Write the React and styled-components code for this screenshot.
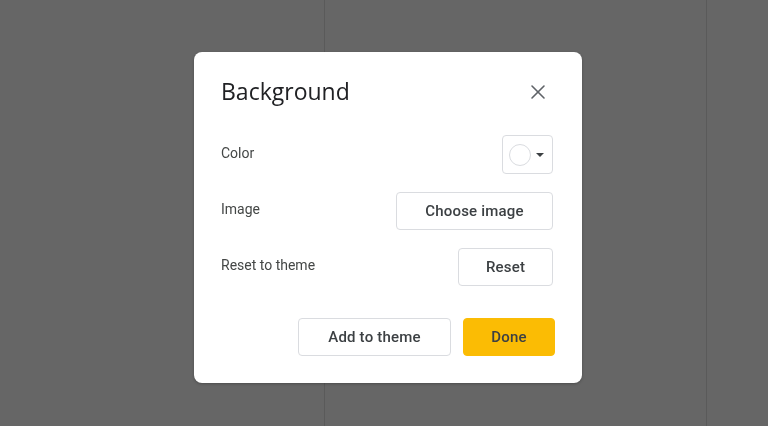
import React from "react";
import styled, { createGlobalStyle } from "styled-components";
import { X } from "lucide-react";

const GlobalStyle = createGlobalStyle`
  html, body {
    margin: 0;
    padding: 0;
    height: 100%;
    overflow: hidden;
  }
  body {
    font-family: Roboto, "Open Sans", Arial, sans-serif;
    background: #666666;
  }
  #root {
    height: 100%;
  }
`;

function App() {
  return (
    <>
      <GlobalStyle />
      <Backdrop>
        <Side $width="324px" />
        <Canvas />
        <Side />
      </Backdrop>
      <Overlay>
        <Dialog>
          <Header>
            <Title>Background</Title>
            <CloseButton aria-label="Close">
              <X size={24} strokeWidth={1.6} />
            </CloseButton>
          </Header>
          <Body>
            <Row>
              <Label>Color</Label>
              <ColorButton>
                <Swatch />
                <Caret />
              </ColorButton>
            </Row>
            <Row>
              <Label>Image</Label>
              <Button $width="157px">Choose image</Button>
            </Row>
            <Row>
              <Label>Reset to theme</Label>
              <Button $width="95px">Reset</Button>
            </Row>
          </Body>
          <Footer>
            <Button $width="153px">Add to theme</Button>
            <Button $width="92px" $primary>Done</Button>
          </Footer>
        </Dialog>
      </Overlay>
    </>
  );
}

export default App;

const Backdrop = styled.div`
  display: flex;
  height: 100%;
  background: #666666;
`;

const Side = styled.div`
  flex: ${(p) => (p.$width ? `0 0 ${p.$width}` : "1")};
`;

const Canvas = styled.div`
  flex: 0 0 381px;
  border-left: 1px solid #5a5a5a;
  border-right: 1px solid #5a5a5a;
`;

const Overlay = styled.div`
  position: fixed;
  inset: 0;
  display: flex;
  align-items: flex-start;
  padding: 52px 0 0 194px;
`;

const Dialog = styled.div`
  width: 388px;
  height: 331px;
  box-sizing: border-box;
  background: #ffffff;
  border-radius: 8px;
  padding: 19px 27px 27px 27px;
  display: flex;
  flex-direction: column;
  box-shadow: 0 1px 3px rgba(0, 0, 0, 0.25);
`;

const Header = styled.div`
  display: flex;
  align-items: center;
  justify-content: space-between;
  height: 42px;
`;

const Title = styled.h1`
  margin: 0 0 2px 0;
  font-family: "Open Sans", Roboto, sans-serif;
  font-size: 23px;
  font-weight: 400;
  color: #202124;
`;

const CloseButton = styled.button`
  border: none;
  background: none;
  padding: 0;
  margin-right: 5px;
  width: 24px;
  height: 24px;
  display: flex;
  align-items: center;
  justify-content: center;
  color: #5f6368;
  cursor: pointer;
`;

const Body = styled.div`
  display: flex;
  flex-direction: column;
  gap: 18px;
  margin-top: 22px;
  margin-right: 2px;
`;

const Row = styled.div`
  display: flex;
  align-items: center;
  justify-content: space-between;
  min-height: 38px;
`;

const Label = styled.span`
  font-size: 14px;
  color: #444746;
  margin-top: -4px;
`;

const Button = styled.button`
  width: ${(p) => p.$width};
  height: 38px;
  box-sizing: border-box;
  border-radius: 4px;
  border: 1px solid ${(p) => (p.$primary ? "#fbbc04" : "#dadce0")};
  background: ${(p) => (p.$primary ? "#fbbc04" : "#ffffff")};
  color: #3c4043;
  font-family: Roboto, Arial, sans-serif;
  font-size: 15px;
  font-weight: 500;
  letter-spacing: 0.2px;
  cursor: pointer;
`;

const ColorButton = styled.button`
  width: 51px;
  height: 39px;
  box-sizing: border-box;
  border: 1px solid #dadce0;
  border-radius: 4px;
  background: #ffffff;
  display: flex;
  align-items: center;
  gap: 5px;
  padding: 0 0 0 6px;
  cursor: pointer;
`;

const Swatch = styled.span`
  width: 22px;
  height: 22px;
  box-sizing: border-box;
  border-radius: 50%;
  border: 1px solid #dadce0;
  background: #ffffff;
`;

const Caret = styled.span`
  width: 0;
  height: 0;
  border-left: 4.5px solid transparent;
  border-right: 4.5px solid transparent;
  border-top: 4.5px solid #3c4043;
`;

const Footer = styled.div`
  display: flex;
  justify-content: flex-end;
  gap: 12px;
  margin-top: auto;
`;
